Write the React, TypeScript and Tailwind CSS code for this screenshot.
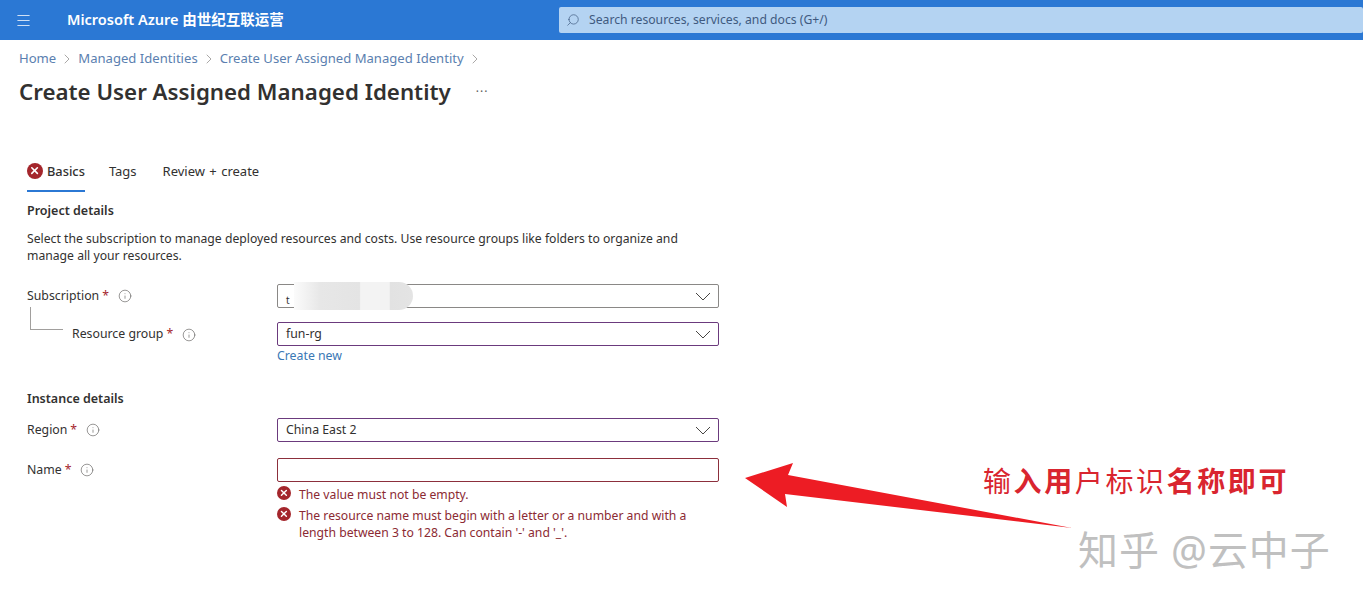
import { ChevronRight, Info, Menu, Search, X } from "lucide-react";

const font = "font-['Noto_Sans','Noto_Sans_CJK_SC',sans-serif]";

const ErrorIcon = ({ size = "w-[14px] h-[14px]" }: { size?: string }) => (
  <span className={`${size} rounded-full bg-[#a4262c] flex items-center justify-center shrink-0`}>
    <X className="w-[70%] h-[70%] text-white" strokeWidth={3.5} />
  </span>
);

const FieldLabel = ({ label }: { label: string }) => (
  <div className="flex items-center text-[12.3px] text-[#323130]">
    <span>{label}</span>
    <span className="ml-[3px] text-[#a4262c]">*</span>
    <Info className="ml-[9px] w-[14px] h-[14px] text-[#605e5c]" strokeWidth={1.1} />
  </div>
);

const Select = ({ value, border }: { value: string; border: string }) => (
  <div className={`w-[442px] h-[24px] border ${border} rounded-[2px] flex items-center justify-between pl-2 pr-[7px] text-[12.3px] text-[#323130]`}>
    <span>{value}</span>
    <svg width="16" height="9" viewBox="0 0 16 9" fill="none" stroke="#484644" strokeWidth="1">
      <path d="M1 1l7 7 7-7" />
    </svg>
  </div>
);

const Crumb = ({ label }: { label: string }) => (
  <>
    <span>{label}</span>
    <ChevronRight className="w-[16px] h-[16px] mx-[3px] text-[#8a8886]" strokeWidth={1.1} />
  </>
);

export default function App() {
  return (
    <div className={`${font} relative w-[1363px] h-[605px] bg-white overflow-hidden`}>
      <header className="h-10 bg-[#2b78d4] flex items-center text-white">
        <Menu className="ml-[15px] w-[17px] h-[17px] text-[#cfe0f5]" strokeWidth={1.6} />
        <span className="ml-[35px] w-[492px] text-[14.5px] font-semibold">Microsoft Azure 由世纪互联运营</span>
        <div className="w-[804px] h-[26px] rounded-[2px] bg-[#b4d3f2] flex items-center text-[12.2px] text-[#3f5a80]">
          <Search className="ml-[7px] w-[14px] h-[14px] -scale-x-100" strokeWidth={1.2} />
          <span className="ml-[9px] pt-[1px]">Search resources, services, and docs (G+/)</span>
        </div>
      </header>

      <div className="px-[19px] pt-[10px]">
        <nav className="flex items-center h-[17px] text-[13.1px] text-[#5b7fb0]">
          <Crumb label="Home" />
          <Crumb label="Managed Identities" />
          <Crumb label="Create User Assigned Managed Identity" />
        </nav>
        <div className="mt-[9px] flex items-center h-[32px]">
          <h1 className="text-[22.3px] font-semibold text-[#323130]">Create User Assigned Managed Identity</h1>
          <span className="ml-[25px] text-[12px] text-[#605e5c] tracking-[1px]">···</span>
        </div>
      </div>

      <div className="pl-[27px] pt-[52px]">
        <div className="flex items-start h-[32px] text-[13px] text-[#323130]">
          <div className="h-[32px] border-b-2 border-[#2b78d4] flex items-start gap-[4px] pt-[3px]">
            <ErrorIcon size="w-[16px] h-[16px]" />
            <span className="font-medium leading-[17px] text-[12.8px]">Basics</span>
          </div>
          <span className="ml-[24px] pt-[2px] leading-[18px]">Tags</span>
          <span className="ml-[26px] pt-[2px] leading-[18px] [word-spacing:1px]">Review + create</span>
        </div>

        <h2 className="mt-[10px] h-[18px] text-[12.5px] font-semibold text-[#323130]">Project details</h2>
        <p className="mt-[10px] w-[680px] text-[12.2px] leading-[17px] text-[#323130]">
          Select the subscription to manage deployed resources and costs. Use resource groups like folders to organize and manage all your resources.
        </p>

        <div className="mt-[20px] flex items-center">
          <div className="w-[250px]"><FieldLabel label="Subscription" /></div>
          <div className="relative">
            <Select value="" border="border-[#8a8886]" />
            <span className="absolute left-[9px] top-[9px] text-[10px] text-[#323130]">t</span>
            <div className="absolute left-[17px] -top-[2px] h-[28px] w-[119px] rounded-r-full bg-[linear-gradient(90deg,#fbfbfb_0%,#e7e7e7_22%,#e4e4e4_55%,#f3f3f3_56%,#f3f3f3_80%,#e2e2e2_81%,#e4e4e4_100%)]" />
          </div>
        </div>

        <div className="mt-[14px] flex items-center relative">
          <div className="w-[250px] pl-[45px] pt-[1px]"><FieldLabel label="Resource group" /></div>
          <Select value="fun-rg" border="border-[#6b3a7d]" />
          <div className="absolute left-[3px] -top-[15px] w-[33px] h-[23px] border-l border-b border-[#a19f9d]" />
        </div>
        <a className="block ml-[250px] mt-[1px] text-[12.3px] leading-[17px] text-[#3a78b5]">Create new</a>

        <h2 className="mt-[26px] h-[18px] text-[12.5px] font-semibold text-[#323130]">Instance details</h2>

        <div className="mt-[10px] flex items-center">
          <div className="w-[250px]"><FieldLabel label="Region" /></div>
          <Select value="China East 2" border="border-[#6b3a7d]" />
        </div>

        <div className="mt-[16px] flex items-center">
          <div className="w-[250px]"><FieldLabel label="Name" /></div>
          <div className="w-[442px] h-[24px] border border-[#8c2f3c] rounded-[2px]" />
        </div>

        <div className="ml-[250px] w-[442px] mt-[4px] text-[12.2px] leading-[17px] text-[#8c2a33]">
          <div className="flex items-start gap-[8px] mt-[1px]">
            <ErrorIcon />
            <span className="leading-[17px]">The value must not be empty.</span>
          </div>
          <div className="flex items-start gap-[8px] mt-[4px]">
            <ErrorIcon />
            <span className="w-[400px]">The resource name must begin with a letter or a number and with a length between 3 to 128. Can contain '-' and '_'.</span>
          </div>
        </div>
      </div>

      {/* annotation drawn on top of the screenshot */}
      <svg className="absolute left-0 top-0 pointer-events-none" width="1363" height="605">
        <polygon points="745,478 793,463 788,475 1072,528 785,494 787,507" fill="#ed1c24" />
      </svg>
      <div className="absolute left-[983px] top-[462px] text-[28px] leading-[38px] tracking-[2.6px] text-[#d9252f] whitespace-nowrap">
        <span>输</span>
        <span className="font-bold">入用</span>
        <span>户标识</span>
        <span className="font-bold">名称即可</span>
      </div>
      <div className="absolute left-[1078px] top-[525px] text-[40px] leading-[50px] tracking-[0.9px] text-[#c0c0c0] whitespace-nowrap">
        知乎 @云中子
      </div>
    </div>
  );
}
